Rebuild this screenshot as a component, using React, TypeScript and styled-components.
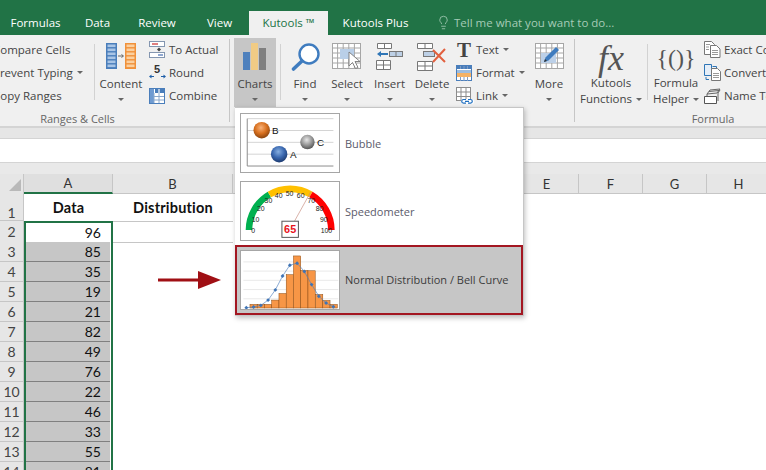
import React from 'react'
import styled, { createGlobalStyle } from 'styled-components'
import { Lightbulb } from 'lucide-react'

const GlobalStyle = createGlobalStyle`
  html, body { margin: 0; padding: 0; background: #fff; }
  * { box-sizing: border-box; }
`

const UI_FONT = `'Open Sans', 'Noto Sans', Arial, sans-serif`
const CELL_FONT = `Lato, 'Liberation Sans', sans-serif`

const Page = styled.div`
  position: relative;
  width: 766px;
  height: 470px;
  overflow: hidden;
  background: #fff;
  font-family: ${UI_FONT};
`

const TabBar = styled.div`
  display: flex;
  align-items: flex-end;
  height: 35px;
  background: #217346;
  color: #fff;
  font-size: 11.5px;
  white-space: nowrap;
`

const Tab = styled.div<{ $w: number; $active?: boolean }>`
  display: flex;
  align-items: center;
  justify-content: center;
  flex: none;
  width: ${(p) => p.$w}px;
  height: 24px;
  padding-bottom: 2px;
  background: ${(p) => (p.$active ? '#f0f0f0' : 'transparent')};
  color: ${(p) => (p.$active ? '#217346' : '#fff')};
`

const TellMe = styled.div`
  display: flex;
  align-items: center;
  gap: 3px;
  height: 24px;
  margin-left: 13px;
  padding-bottom: 2px;
  color: #a6cbb6;
`

const Ribbon = styled.div`
  display: flex;
  height: 93px;
  overflow: hidden;
  background: #f0f0f0;
  border-bottom: 2px solid #d4d4d4;
  color: #444;
  font-size: 11.5px;
  white-space: nowrap;
`

const Group = styled.div<{ $w: number; $shift?: number }>`
  display: flex;
  flex: none;
  flex-direction: column;
  position: relative;
  width: ${(p) => p.$w}px;
  margin-left: ${(p) => p.$shift ?? 0}px;
  padding-top: 3px;
  &::after {
    content: '';
    position: absolute;
    right: 0;
    top: 4px;
    bottom: 4px;
    width: 1px;
    background: #c6c6c6;
  }
`

const GroupBody = styled.div<{ $pad?: number }>`
  display: flex;
  flex: none;
  height: 73px;
  padding-left: ${(p) => p.$pad ?? 0}px;
`

const GroupLabel = styled.div`
  text-align: center;
  color: #666;
  font-size: 11px;
  line-height: 15px;
`

const Large = styled.div<{ $w: number; $on?: boolean }>`
  display: flex;
  flex: none;
  flex-direction: column;
  align-items: center;
  width: ${(p) => p.$w}px;
  height: 69px;
  background: ${(p) => (p.$on ? '#c6c6c6' : 'transparent')};
`

const IconZone = styled.div`
  display: flex;
  justify-content: center;
  height: 38px;
  padding-top: 5px;
`

const LargeText = styled.div`
  line-height: 16px;
  text-align: center;
`

const CaretLine = styled.div`
  display: flex;
  align-items: center;
  height: 15px;
`

const Caret = styled.span<{ $gap?: number }>`
  display: inline-block;
  margin-left: ${(p) => p.$gap ?? 0}px;
  border-left: 3px solid transparent;
  border-right: 3px solid transparent;
  border-top: 3px solid #666;
  vertical-align: middle;
`

const Divider = styled.div<{ $gapLeft: number; $gapRight: number }>`
  flex: none;
  align-self: flex-start;
  width: 1px;
  height: 56px;
  margin: 6px ${(p) => p.$gapRight}px 0 ${(p) => p.$gapLeft}px;
  background: #d2d2d2;
`

const SmallCol = styled.div<{ $w: number; $left?: number }>`
  display: flex;
  flex: none;
  flex-direction: column;
  width: ${(p) => p.$w}px;
  margin-left: ${(p) => p.$left ?? 0}px;
`

const SmallRow = styled.div`
  display: flex;
  align-items: center;
  height: 23px;
`

const SmallIcon = styled.span`
  display: flex;
  flex: none;
  align-items: center;
  width: 20px;
`

const SerifT = styled.span`
  padding-left: 1px;
  color: #444;
  font: bold 21px/20px 'Liberation Serif', serif;
`

const GlyphIcon = styled.span<{ $size: number; $italic?: boolean }>`
  color: #555;
  font-family: 'Liberation Serif', serif;
  font-size: ${(p) => p.$size}px;
  font-style: ${(p) => (p.$italic ? 'italic' : 'normal')};
  line-height: 30px;
`

const Gap = styled.div`
  height: 10px;
  background: #e6e6e6;
`

const FormulaBar = styled.div`
  height: 25px;
  background: #fff;
  border-top: 1px solid #d4d4d4;
  border-bottom: 1px solid #d4d4d4;
`

const HeaderStrip = styled.div`
  height: 11px;
  background: #e9e9e9;
`

const SheetRow = styled.div<{ $h: number }>`
  display: grid;
  grid-template-columns: 24px 89px 120px 282px 64px 64px 64px 64px;
  height: ${(p) => p.$h}px;
`

const Corner = styled.div`
  display: flex;
  align-items: flex-end;
  justify-content: flex-end;
  padding: 0 2px 3px 0;
  background: #e6e6e6;
  border-right: 1px solid #c6c6c6;
`

const CornerMark = styled.div`
  width: 0;
  height: 0;
  border-left: 12px solid transparent;
  border-bottom: 12px solid #b9b9b9;
`

const ColHead = styled.div<{ $on?: boolean; $blank?: boolean }>`
  display: flex;
  align-items: center;
  justify-content: center;
  background: ${(p) => (p.$on ? '#dfdfdf' : '#e6e6e6')};
  border-right: 1px solid ${(p) => (p.$blank ? '#e6e6e6' : '#c6c6c6')};
  border-bottom: ${(p) => (p.$on ? '2px solid #217346' : '1px solid #c6c6c6')};
  color: #333;
  font: 13px ${CELL_FONT};
`

const RowHead = styled.div<{ $bottom?: boolean }>`
  display: flex;
  align-items: ${(p) => (p.$bottom ? 'flex-end' : 'center')};
  justify-content: center;
  background: #e6e6e6;
  border-right: 1px solid #c6c6c6;
  border-bottom: 1px solid #c6c6c6;
  color: #444;
  font: 14px/${(p) => (p.$bottom ? '15px' : '18px')} ${CELL_FONT};
`

const TitleCell = styled.div`
  display: flex;
  align-items: center;
  justify-content: center;
  color: #111;
  font: bold 14.5px ${CELL_FONT};
  letter-spacing: 0.2px;
`

const SelCell = styled.div<{ $first?: boolean }>`
  padding-right: 1px;
  background: #fff;
  border-left: 2px solid #217346;
  border-right: 2px solid #217346;
  border-top: ${(p) => (p.$first ? '2px solid #217346' : 'none')};
`

const SelValue = styled.div<{ $gray: boolean }>`
  height: 100%;
  padding-right: 9px;
  background: ${(p) => (p.$gray ? '#c6c6c6' : '#fff')};
  border-bottom: 1px solid #808080;
  color: #111;
  font: 14px/19px ${CELL_FONT};
  text-align: right;
`

const LinedCell = styled.div<{ $first?: boolean }>`
  border-top: ${(p) => (p.$first ? '1px solid #c6c6c6' : 'none')};
  border-bottom: 1px solid #c6c6c6;
`

const Menu = styled.div`
  position: absolute;
  left: 235px;
  top: 107px;
  display: flex;
  flex-direction: column;
  width: 289px;
  padding-top: 1px;
  background: #fff;
  border: 1px solid #c6c6c6;
  border-left: none;
  box-shadow: 1px 2px 5px rgba(0, 0, 0, 0.25);
  color: #5b5b6b;
  font-size: 11px;
`

const MenuItem = styled.div<{ $on?: boolean }>`
  display: flex;
  align-items: center;
  gap: 5px;
  height: ${(p) => (p.$on ? '70px' : '68px')};
  padding-left: ${(p) => (p.$on ? '3px' : '5px')};
  padding-bottom: ${(p) => (p.$on ? '1px' : '0')};
  background: ${(p) => (p.$on ? '#c6c6c6' : 'transparent')};
  border: ${(p) => (p.$on ? '2px solid #a31621' : 'none')};
  color: ${(p) => (p.$on ? '#3c3c3c' : 'inherit')};
`

const Thumb = styled.div`
  flex: none;
  width: 100px;
  height: 60px;
  background: #fff;
  border: 1px solid #a6a6a6;
  svg { display: block; }
`

const ArrowMark = styled.svg`
  position: absolute;
  left: 158px;
  top: 270px;
`

const ContentIcon = () => {
  const rows = [0, 1, 2, 3, 4, 5]
  return (
    <svg width="30" height="27" viewBox="0 0 30 27">
      <rect x="0" y="0" width="11" height="26" fill="#4a7ebb" />
      <rect x="19" y="0" width="11" height="26" fill="#f0913a" />
      {rows.map((r) => (
        <g key={r}>
          <rect x="1.5" y={1.5 + r * 4} width="8" height="2.6" fill="#a9c5e6" />
          <rect x="20.5" y={1.5 + r * 4} width="8" height="2.6" fill="#fbd09f" />
        </g>
      ))}
      <path d="M12 13h5M15.5 11.5l2 1.5-2 1.5" stroke="#666" fill="none" />
    </svg>
  )
}

const ToActualIcon = () => (
  <svg width="16" height="17" viewBox="0 0 16 17">
    <rect x=".5" y=".5" width="15" height="5" fill="#fff" stroke="#8496b0" />
    <path d="M3 3h6" stroke="#c00000" />
    <rect x=".5" y="11.5" width="15" height="5" fill="#fff" stroke="#8496b0" />
    <path d="M9 14h5" stroke="#1f4e9f" />
    <path d="M10 6.5l2 2h-4zM10 10.5l-2-2h4z" fill="#444" />
  </svg>
)

const RoundIcon = () => (
  <svg width="17" height="17" viewBox="0 0 17 17">
    <text x="5" y="9" fontSize="11" fontWeight="700" fill="#333" fontFamily="Liberation Sans">5</text>
    <path d="M1 12.5h4M12 12.5h4" stroke="#1f5fa8" />
    <path d="M0 12.5l2.5-2v4zM17 12.5l-2.5-2v4z" fill="#1f5fa8" />
  </svg>
)

const CombineIcon = () => (
  <svg width="16" height="16" viewBox="0 0 16 16">
    <rect x=".5" y=".5" width="15" height="15" fill="#fff" stroke="#4a7ebb" />
    <rect x="1" y="1" width="14" height="4" fill="#4a7ebb" />
    <rect x="1" y="1" width="4" height="14" fill="#6f9bd1" />
    <path d="M5 5v10M10 1v14M5 8.5h10M5 12h10" stroke="#8aa8cc" />
    <path d="M5.5 1v4M10 1v4" stroke="#fff" />
  </svg>
)

const ChartsIcon = () => (
  <svg width="24" height="27" viewBox="0 0 24 27">
    <rect x="0" y="9" width="7" height="18" fill="#4f81bd" />
    <rect x="8" y="0" width="7" height="27" fill="#f0cb85" />
    <rect x="16" y="5" width="7" height="22" fill="#808080" />
  </svg>
)

const FindIcon = () => (
  <svg width="29" height="28" viewBox="0 0 29 28">
    <circle cx="18" cy="11" r="9.5" fill="#fff" stroke="#3f7cbf" strokeWidth="2.4" />
    <path d="M11 18L2.5 26" stroke="#3f7cbf" strokeWidth="3.6" strokeLinecap="round" />
  </svg>
)

const GridLines = ({ w, h }: { w: number; h: number }) => {
  const cols = [1, 2, 3, 4].map((i) => (i * w) / 5)
  const rows = [1, 2, 3, 4].map((i) => (i * h) / 5)
  return (
    <g stroke="#a6a6a6">
      <rect x=".5" y=".5" width={w} height={h} fill="#fff" />
      {cols.map((x) => (
        <path key={x} d={`M${x} 0V${h}`} />
      ))}
      {rows.map((y) => (
        <path key={y} d={`M0 ${y}H${w}`} />
      ))}
    </g>
  )
}

const SelectIcon = () => (
  <svg width="30" height="29" viewBox="0 0 30 29">
    <GridLines w={28} h={25} />
    <rect x="8" y="6" width="14" height="10" fill="#b9cfe8" />
    <path d="M17 9l0 14 3.5-3.5 3 6 2.5-1-3-6 5 0z" fill="#fff" stroke="#777" strokeWidth=".9" />
  </svg>
)

const InsertIcon = () => (
  <svg width="28" height="28" viewBox="0 0 28 28">
    <path d="M1.500 .5h14v5h-14zM8.500 .5v5" fill="#fff" stroke="#777" />
    <rect x="13.500" y="8.500" width="13" height="5" fill="#bdd0e6" stroke="#777" />
    <path d="M20 8.500v5" stroke="#777" />
    <path d="M4 11h8" stroke="#2e75b6" strokeWidth="2" />
    <path d="M1 11l4-3v6z" fill="#2e75b6" />
    <path d="M.5 17.500h14v9h-14zM.5 22h14M7.500 17.500v9" fill="#fff" stroke="#777" />
  </svg>
)

const DeleteIcon = () => (
  <svg width="30" height="28" viewBox="0 0 30 28">
    <path d="M.5 .5h15v5H.5zM8 .5v5" fill="#fff" stroke="#777" />
    <rect x="6.500" y="8.500" width="11" height="5" fill="#bdd0e6" stroke="#777" />
    <path d="M.5 18.500h15v9H.5zM.5 23h15M8 18.500v9" fill="#fff" stroke="#777" />
    <path d="M16 7l12 12M28 6L16 19" stroke="#e2603f" strokeWidth="2" />
  </svg>
)

const FormatIcon = () => (
  <svg width="16" height="16" viewBox="0 0 16 16">
    <rect x=".5" y=".5" width="15" height="15" fill="#fff" stroke="#4a7ebb" />
    <rect x="1" y="1" width="14" height="3" fill="#4a7ebb" />
    <rect x="1" y="5" width="14" height="3" fill="#9dbde0" />
    <rect x="1" y="8" width="14" height="4" fill="#f4b266" />
    <path d="M4.500 1v3M8 1v3M11.500 1v3M4.500 12v4M8 12v4M11.500 12v4" stroke="#7f9cc4" />
  </svg>
)

const LinkIcon = () => (
  <svg width="18" height="17" viewBox="0 0 18 17">
    <g stroke="#8c8c8c" fill="#fff">
      <rect x=".5" y=".5" width="14" height="13" />
      <path d="M5 .5v13M10 .5v13M.5 5h14M.5 9.500h14" fill="none" />
    </g>
    <rect x="5" y="12" width="13" height="5" rx="2" fill="#fff" />
    <path d="M10 12.500H7.500a1.800 1.800 0 0 0 0 3.600H10M12 12.500h2.500a1.800 1.800 0 0 1 0 3.600H12M9 14.300h4" fill="none" stroke="#1f6fc0" strokeWidth="1.200" />
  </svg>
)

const MoreIcon = () => (
  <svg width="29" height="27" viewBox="0 0 29 27">
    <GridLines w={28} h={25} />
    <rect x="6" y="10" width="15" height="10" fill="#bcd0e8" />
    <path d="M9 19l1.500-4.500L21 4l3 3-10.500 10.500z" fill="#3f7cbf" />
    <path d="M9 19l1-3 2 2z" fill="#333" />
  </svg>
)

const CopyIcon = () => (
  <svg width="17" height="17" viewBox="0 0 17 17">
    <path d="M.5.500h7l3 3v10H.5z" fill="#fff" stroke="#777" />
    <path d="M6.500 4.500h6l3.500 3.500v8.500H6.500z" fill="#fff" stroke="#777" />
    <path d="M2 3.500h4M2 6h3M2 8.500h3M8 9.500h6M8 11.500h6M8 13.500h6" stroke="#999" />
  </svg>
)

const ConvertIcon = () => (
  <svg width="17" height="17" viewBox="0 0 17 17">
    <path d="M.5.500h7v11H.5z" fill="#e5eef8" stroke="#2e75b6" />
    <path d="M7.500 4.500h6l3 3v9h-9z" fill="#fff" stroke="#777" />
    <path d="M9 9.500h6M9 11.500h6M9 13.500h6" stroke="#999" />
    <path d="M8.500 2.500h4v1.500M2 13v2.500h3" fill="none" stroke="#2e75b6" />
  </svg>
)

const NameIcon = () => (
  <svg width="17" height="16" viewBox="0 0 17 16">
    <path d="M.5 8.500h12v7H.5z" fill="#fff" stroke="#555" />
    <path d="M3 6l10-1 3-4-10 1zM5 3.500l10-1M3 8V6M14 13V5l2-3" fill="none" stroke="#666" />
  </svg>
)

const BubbleThumb = () => (
  <svg width="98" height="58" viewBox="31 26 298 176">
    <defs>
      <radialGradient id="ball-orange" cx="45%" cy="35%" r="65%">
        <stop offset="0%" stopColor="#f8b27a" />
        <stop offset="55%" stopColor="#d8701f" />
        <stop offset="100%" stopColor="#8a4510" />
      </radialGradient>
      <radialGradient id="ball-gray" cx="45%" cy="35%" r="65%">
        <stop offset="0%" stopColor="#e6e6e6" />
        <stop offset="55%" stopColor="#999" />
        <stop offset="100%" stopColor="#555" />
      </radialGradient>
      <radialGradient id="ball-blue" cx="45%" cy="35%" r="65%">
        <stop offset="0%" stopColor="#86aee0" />
        <stop offset="55%" stopColor="#3a68b0" />
        <stop offset="100%" stopColor="#1d3b70" />
      </radialGradient>
    </defs>
    <path d="M50 40H312M50 76H312M50 112H312M50 148H312" stroke="#bdbdbd" strokeWidth="2" />
    <path d="M50 40V184H312" stroke="#8c8c8c" strokeWidth="3" fill="none" />
    <circle cx="94" cy="75" r="25" fill="url(#ball-orange)" />
    <circle cx="233" cy="111" r="22" fill="url(#ball-gray)" />
    <circle cx="147" cy="148" r="25" fill="url(#ball-blue)" />
    <g fontSize="30" fill="#111" fontFamily="Liberation Sans">
      <text x="125" y="86">B</text>
      <text x="262" y="124">C</text>
      <text x="180" y="161">A</text>
    </g>
  </svg>
)

const SPEED_LABELS: [string, number, number][] = [
  ['0', 308, 173], ['10', 315, 139], ['20', 331, 108], ['30', 354, 83],
  ['40', 385, 68], ['50', 418, 63], ['60', 452, 68], ['70', 484, 83],
  ['80', 509, 108], ['90', 522, 139], ['100', 530, 173],
]

const SpeedThumb = () => (
  <svg width="98" height="58" viewBox="271 19 297 176">
    <path d="M295 165A125 125 0 0 1 357 57" fill="none" stroke="#00b050" strokeWidth="20" />
    <path d="M357 57A125 125 0 0 1 483 57" fill="none" stroke="#ffc000" strokeWidth="20" />
    <path d="M483 57A125 125 0 0 1 545 165" fill="none" stroke="#ff0000" strokeWidth="20" />
    <path d="M432 140L483 48" stroke="#c58a7c" strokeWidth="2" />
    <g fontSize="21" fill="#222" textAnchor="middle" fontFamily="Liberation Sans">
      {SPEED_LABELS.map(([label, x, y]) => (
        <text key={label} x={x} y={y}>{label}</text>
      ))}
    </g>
    <rect x="395" y="138" width="50" height="49" fill="#fff" stroke="#555" strokeWidth="3" />
    <text x="420" y="175" fontSize="33" fontWeight="700" fill="#e8141c" textAnchor="middle" fontFamily="Liberation Sans">65</text>
  </svg>
)

const BARS: [number, number][] = [
  [298, 385], [320, 385], [342, 385], [364, 372], [386, 352], [408, 295],
  [430, 238], [452, 282], [474, 283], [497, 355], [519, 373], [541, 385],
]

const CURVE: [number, number][] = [
  [287, 395], [309, 393], [331, 388], [353, 372], [375, 341], [397, 299], [419, 266],
  [441, 260], [463, 285], [485, 325], [507, 360], [529, 381], [551, 392],
]

const BellThumb = () => (
  <svg width="98" height="58" viewBox="271 223 297 176">
    <path d="M278 256H566M278 284H566M278 312H566M278 340H566M278 368H566" stroke="#dedede" strokeWidth="2" />
    {BARS.map(([x, y]) => (
      <rect key={x} x={x} y={y} width="22" height={396 - y} fill="#f79646" stroke="#8a4a12" strokeWidth="1.500" />
    ))}
    <polyline points={CURVE.map((p) => p.join(',')).join(' ')} fill="none" stroke="#4f81bd" strokeWidth="2" />
    {CURVE.map(([x, y]) => (
      <path key={x} d={`M${x} ${y - 6}l6 6-6 6-6-6z`} fill="#3f74b5" />
    ))}
  </svg>
)

const VALUES = ['96', '85', '35', '19', '21', '82', '49', '76', '22', '46', '33', '55', '81']

export default function App() {
  return (
    <Page>
      <GlobalStyle />
      <TabBar>
        <Tab $w={71}>Formulas</Tab>
        <Tab $w={53}>Data</Tab>
        <Tab $w={66}>Review</Tab>
        <Tab $w={59}>View</Tab>
        <Tab $w={79} $active>Kutools ™</Tab>
        <Tab $w={95}>Kutools Plus</Tab>
        <TellMe>
          <Lightbulb size={15} strokeWidth={1.3} />
          Tell me what you want to do...
        </TellMe>
      </TabBar>

      <Ribbon>
        <Group $w={305} $shift={-75}>
          <GroupBody $pad={68}>
            <SmallCol $w={101}>
              <SmallRow>Compare Cells</SmallRow>
              <SmallRow>Prevent Typing<Caret $gap={4} /></SmallRow>
              <SmallRow>Copy Ranges</SmallRow>
            </SmallCol>
            <Divider $gapLeft={0} $gapRight={1} />
            <Large $w={50}>
              <IconZone><ContentIcon /></IconZone>
              <LargeText>Content</LargeText>
              <CaretLine><Caret /></CaretLine>
            </Large>
            <SmallCol $w={78} $left={3}>
              <SmallRow><SmallIcon><ToActualIcon /></SmallIcon>To Actual</SmallRow>
              <SmallRow><SmallIcon><RoundIcon /></SmallIcon>Round</SmallRow>
              <SmallRow><SmallIcon><CombineIcon /></SmallIcon>Combine</SmallRow>
            </SmallCol>
          </GroupBody>
          <GroupLabel>Ranges &amp; Cells</GroupLabel>
        </Group>

        <Group $w={345}>
          <GroupBody $pad={4}>
            <Large $w={42} $on>
              <IconZone><ChartsIcon /></IconZone>
              <LargeText>Charts</LargeText>
              <CaretLine><Caret /></CaretLine>
            </Large>
            <Divider $gapLeft={4} $gapRight={3} />
            <Large $w={42}>
              <IconZone><FindIcon /></IconZone>
              <LargeText>Find</LargeText>
              <CaretLine><Caret /></CaretLine>
            </Large>
            <Large $w={42}>
              <IconZone><SelectIcon /></IconZone>
              <LargeText>Select</LargeText>
              <CaretLine><Caret /></CaretLine>
            </Large>
            <Large $w={43}>
              <IconZone><InsertIcon /></IconZone>
              <LargeText>Insert</LargeText>
              <CaretLine><Caret /></CaretLine>
            </Large>
            <Large $w={42}>
              <IconZone><DeleteIcon /></IconZone>
              <LargeText>Delete</LargeText>
              <CaretLine><Caret /></CaretLine>
            </Large>
            <SmallCol $w={74} $left={3}>
              <SmallRow><SmallIcon><SerifT>T</SerifT></SmallIcon>Text<Caret $gap={4} /></SmallRow>
              <SmallRow><SmallIcon><FormatIcon /></SmallIcon>Format<Caret $gap={4} /></SmallRow>
              <SmallRow><SmallIcon><LinkIcon /></SmallIcon>Link<Caret $gap={4} /></SmallRow>
            </SmallCol>
            <Large $w={38}>
              <IconZone><MoreIcon /></IconZone>
              <LargeText>More</LargeText>
              <CaretLine><Caret /></CaretLine>
            </Large>
          </GroupBody>
        </Group>

        <Group $w={276}>
          <GroupBody>
            <Large $w={72}>
              <IconZone><GlyphIcon $size={36} $italic>fx</GlyphIcon></IconZone>
              <LargeText>Kutools<br />Functions<Caret $gap={4} /></LargeText>
            </Large>
            <Divider $gapLeft={0} $gapRight={1} />
            <Large $w={54}>
              <IconZone><GlyphIcon $size={24}>{'{()}'}</GlyphIcon></IconZone>
              <LargeText>Formula<br />Helper<Caret $gap={4} /></LargeText>
            </Large>
            <SmallCol $w={100} $left={1}>
              <SmallRow><SmallIcon><CopyIcon /></SmallIcon>Exact Copy</SmallRow>
              <SmallRow><SmallIcon><ConvertIcon /></SmallIcon>Convert</SmallRow>
              <SmallRow><SmallIcon><NameIcon /></SmallIcon>Name Tools</SmallRow>
            </SmallCol>
          </GroupBody>
          <GroupLabel>Formula</GroupLabel>
        </Group>
      </Ribbon>

      <Gap />
      <FormulaBar />
      <HeaderStrip />

      <SheetRow $h={20}>
        <Corner><CornerMark /></Corner>
        <ColHead $on>A</ColHead>
        <ColHead>B</ColHead>
        <ColHead $blank />
        <ColHead>E</ColHead>
        <ColHead>F</ColHead>
        <ColHead>G</ColHead>
        <ColHead>H</ColHead>
      </SheetRow>
      <SheetRow $h={27}>
        <RowHead $bottom>1</RowHead>
        <TitleCell>Data</TitleCell>
        <TitleCell>Distribution</TitleCell>
      </SheetRow>
      {VALUES.map((value, i) => (
        <SheetRow key={i} $h={i === 0 ? 21 : 20}>
          <RowHead>{i + 2}</RowHead>
          <SelCell $first={i === 0}>
            <SelValue $gray={i > 0}>{value}</SelValue>
          </SelCell>
          {i === 0 && <LinedCell $first />}
        </SheetRow>
      ))}

      <ArrowMark width="64" height="20" viewBox="0 0 64 20">
        <path d="M0 8.500h41v3H0z" fill="#a00f14" />
        <path d="M40 1l23 9-23 9z" fill="#a00f14" />
      </ArrowMark>

      <Menu>
        <MenuItem>
          <Thumb><BubbleThumb /></Thumb>
          Bubble
        </MenuItem>
        <MenuItem>
          <Thumb><SpeedThumb /></Thumb>
          Speedometer
        </MenuItem>
        <MenuItem $on>
          <Thumb><BellThumb /></Thumb>
          Normal Distribution / Bell Curve
        </MenuItem>
      </Menu>
    </Page>
  )
}
